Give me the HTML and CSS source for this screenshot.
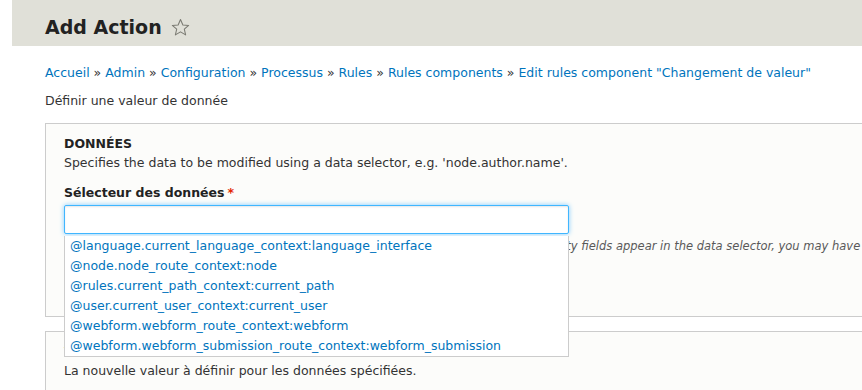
FILE: index.html
```html
<!DOCTYPE html>
<html lang="fr">
<head>
<meta charset="utf-8">
<title>Add Action</title>
<link rel="stylesheet" href="styles.css">
</head>
<body>
<header class="page-header">
  <h1 class="page-title">Add Action</h1>
  <svg class="shortcut-star" width="19" height="19" viewBox="0 0 20 20"><path d="M10 1.6 L12.5 7.3 L18.6 7.8 L14 11.8 L15.4 17.8 L10 14.6 L4.6 17.8 L6 11.8 L1.4 7.8 L7.5 7.3 Z" fill="none" stroke="#7a7a72" stroke-width="1.1" stroke-linejoin="round"/></svg>
</header>
<main class="content">
  <nav class="breadcrumb">
    <a href="#">Accueil</a> » <a href="#">Admin</a> » <a href="#">Configuration</a> » <a href="#">Processus</a> » <a href="#">Rules</a> » <a href="#">Rules components</a> » <a href="#">Edit rules component "Changement de valeur"</a>
  </nav>
  <p class="intro">Définir une valeur de donnée</p>
  <section class="fieldset">
    <h2 class="fieldset-title">Données</h2>
    <div class="fieldset-desc">Specifies the data to be modified using a data selector, e.g. 'node.author.name'.</div>
    <label class="field-label">Sélecteur des données<span class="required">*</span></label>
    <div class="autocomplete">
      <input class="text-input" type="text">
      <ul class="ac-list">
        <li>@language.current_language_context:language_interface</li>
        <li>@node.node_route_context:node</li>
        <li>@rules.current_path_context:current_path</li>
        <li>@user.current_user_context:current_user</li>
        <li>@webform.webform_route_context:webform</li>
        <li>@webform.webform_submission_route_context:webform_submission</li>
      </ul>
    </div>
    <div class="field-desc">The data selector helps you drill down into the data available to Rules. <em>To make entity fields appear in the data selector, you may have to use the condition 'entity has field' (or 'content is of type').</em></div>
    <button class="switch-btn" type="button">Switch to the direct input mode</button>
  </section>
  <section class="fieldset fieldset-value">
    <h2 class="fieldset-title">Valeur</h2>
    <div class="fieldset-desc">La nouvelle valeur à définir pour les données spécifiées.</div>
  </section>
</main>
</body>
</html>
```
FILE: styles.css
```css
html {
  overflow: hidden;
}
body {
  margin: 0;
  font-family: "DejaVu Sans", Verdana, sans-serif;
  font-size: 12.5px;
  color: #333;
  background: #fff;
}
.page-header {
  margin-left: 12px;
  height: 46px;
  box-sizing: border-box;
  padding: 9px 0 0 33px;
  background: #e0e0d8;
  display: flex;
  align-items: center;
  gap: 9px;
  width: 1100px;
}
.page-title {
  margin: 0;
  font-size: 19px;
  font-weight: bold;
  color: #222;
  line-height: 1;
}
.shortcut-star {
  display: block;
}
.content {
  padding-left: 45px;
}
.breadcrumb {
  margin-top: 18px;
  line-height: 18px;
  white-space: nowrap;
  color: #333;
}
.breadcrumb a,
.ac-list li {
  color: #0074bd;
  text-decoration: none;
}
.intro {
  margin: 10px 0 0;
  line-height: 18px;
}
.fieldset {
  width: 1100px;
  box-sizing: border-box;
  margin-top: 13px;
  border: 1px solid #ccc;
  background: #fcfcfa;
  padding: 11px 18px 21px;
}
.fieldset-value {
  margin-top: 14px;
}
.fieldset-title {
  margin: 0;
  font-size: 12.5px;
  font-weight: bold;
  text-transform: uppercase;
  line-height: 18px;
  color: #222;
}
.fieldset-desc {
  line-height: 20px;
}
.field-label {
  display: block;
  margin-top: 11px;
  font-weight: bold;
  line-height: 18px;
  color: #222;
}
.required {
  color: #e32700;
  margin-left: 3px;
}
.autocomplete {
  position: relative;
  margin-top: 3px;
  width: 505px;
}
.text-input {
  display: block;
  box-sizing: border-box;
  width: 505px;
  height: 29px;
  margin: 0;
  border: 1px solid #40b6ff;
  border-radius: 2px;
  box-shadow: inset 0 1px 2px rgba(0,0,0,.1), 0 0 5px #7fcaff;
  background: #fff;
  outline: none;
}
.ac-list {
  position: absolute;
  top: 100%;
  left: 0;
  z-index: 2;
  box-sizing: border-box;
  width: 505px;
  margin: 2px 0 0;
  padding: 0;
  list-style: none;
  background: #fff;
  border: 1px solid #ccc;
  border-top: 0;
}
.ac-list li {
  line-height: 20px;
  padding: 0 5px;
  white-space: nowrap;
}
.field-desc {
  margin-top: 4px;
  line-height: 16px;
  white-space: nowrap;
  color: #595959;
  font-size: 11.5px;
  text-indent: 18px;
}
.switch-btn {
  display: block;
  margin-top: 12px;
  font: inherit;
  padding: 6px 14px;
  border: 1px solid #a6a6a6;
  border-radius: 20px;
  background: #f2f1eb;
}
```
